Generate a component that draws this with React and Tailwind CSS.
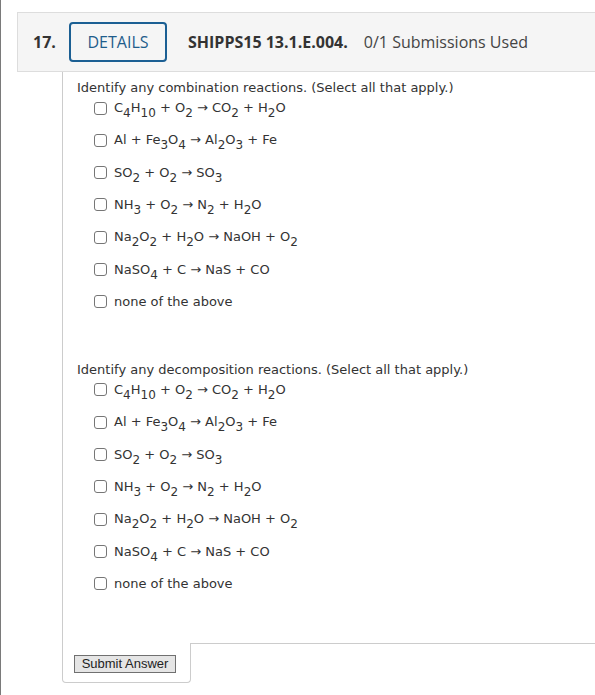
import React from "react";

const equations = [
  "C_4H_10 + O_2 → CO_2 + H_2O",
  "Al + Fe_3O_4 → Al_2O_3 + Fe",
  "SO_2 + O_2 → SO_3",
  "NH_3 + O_2 → N_2 + H_2O",
  "Na_2O_2 + H_2O → NaOH + O_2",
  "NaSO_4 + C → NaS + CO",
  "none of the above",
];

function Formula({ text }) {
  const parts = text.split(/(_\d+)/);
  return (
    <span className="whitespace-pre">
      {parts.map((p, i) =>
        p.startsWith("_") ? (
          <span key={i} className="text-[12px] leading-[0] align-[-5px]">
            {p.slice(1)}
          </span>
        ) : (
          <span key={i}>{p}</span>
        )
      )}
    </span>
  );
}

function Question({ title }) {
  return (
    <div>
      <div className="leading-[16px]">{title}</div>
      <div className="flex flex-col gap-[8.33px] pl-[17px]">
        {equations.map((e, i) => (
          <div key={i} className="flex h-[24px] items-center">
            <span className="mr-[7px] h-[13px] w-[13px] shrink-0 rounded-[3px] border border-[#767676] bg-white" />
            <span className="leading-[16px]">
              <Formula text={e} />
            </span>
          </div>
        ))}
      </div>
    </div>
  );
}

export default function App() {
  return (
    <div className="h-[695px] w-[595px] overflow-hidden border-l border-[#7a7a7a] bg-white pt-[12px]">
      <div className="ml-[16px] flex h-[60px] items-center border border-r-0 border-[#dddddd] bg-[#f5f5f5] pl-[15px] font-['Open_Sans',sans-serif] text-[16px] text-[#333]">
        <span className="w-[36px] font-bold">17.</span>
        <span className="flex h-[40px] w-[98px] items-center justify-center rounded-[4px] border-2 border-[#1b5f93] font-medium text-[#1f5d8c]">
          DETAILS
        </span>
        <span className="ml-[21px] font-bold">SHIPPS15 13.1.E.004.</span>
        <span className="ml-[16px] text-[#444]">0/1 Submissions Used</span>
      </div>
      <div className="ml-[61px]">
        <div className="border-l border-[#cccccc] pb-[47px] pl-[14px] pt-[8px] font-['DejaVu_Sans',Verdana,sans-serif] text-[13px] text-[#333]">
          <Question title="Identify any combination reactions. (Select all that apply.)" />
          <div className="mt-[48px]">
            <Question title="Identify any decomposition reactions. (Select all that apply.)" />
          </div>
        </div>
        <div className="flex">
          <div className="h-[40px] w-[129px] rounded-b-[4px] border-x border-b border-[#cccccc] pl-[11px] pt-[12px]">
            <button className="flex h-[18px] w-[102px] items-center justify-center border border-[#707070] bg-[#e5e5e5] font-['Liberation_Sans',Arial,sans-serif] text-[13px] leading-none text-[#222]">
              Submit Answer
            </button>
          </div>
          <div className="flex-1 border-t border-[#cccccc]" />
        </div>
      </div>
    </div>
  );
}
